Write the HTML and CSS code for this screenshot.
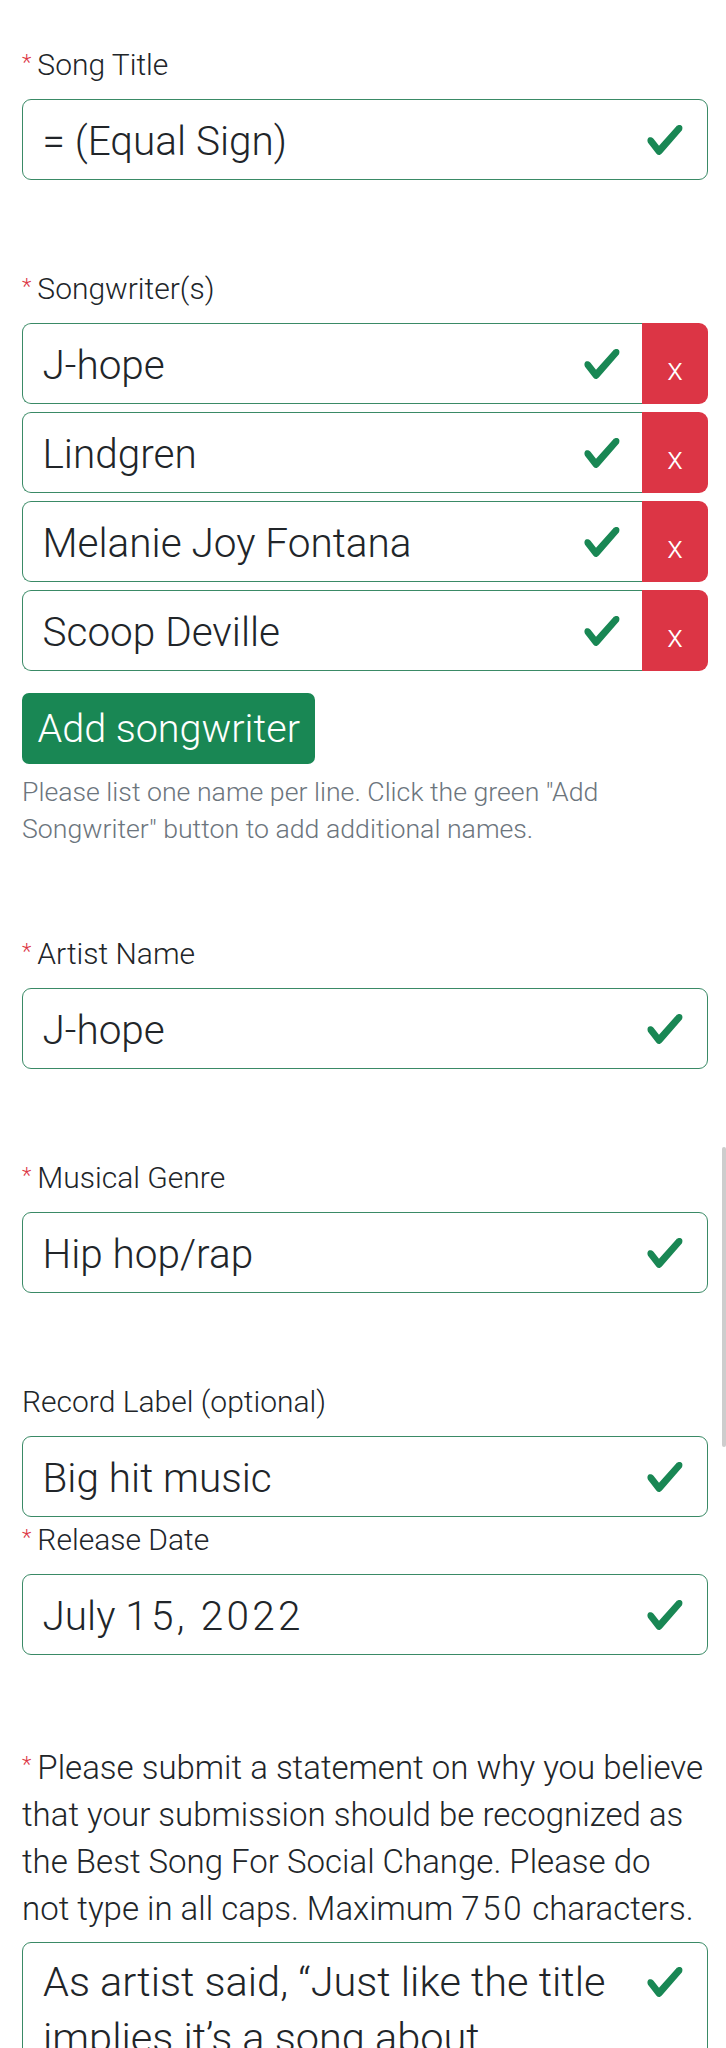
FILE: index.html
```html
<!DOCTYPE html>
<html lang="en">
<head>
<meta charset="utf-8">
<title>Submission form</title>
<link rel="stylesheet" href="styles.css">
</head>
<body>
<div class="page">
<form class="form">
  <div class="field field-first">
    <label class="label"><span class="req">*</span>Song Title</label>
    <div class="input">
      <span class="value">= (Equal Sign)</span>
      <svg class="check" viewBox="0 0 8 8"><path d="M2.3 6.73.6 4.53c-.4-1.04.46-1.4 1.1-.8l1.1 1.4 3.4-3.8c.6-.63 1.6-.27 1.2.7l-4 4.6c-.43.5-.8.4-1.1.1z"/></svg>
    </div>
  </div>

  <div class="field">
    <label class="label"><span class="req">*</span>Songwriter(s)</label>
    <div class="rows">
      <div class="group">
        <div class="input in-group">
          <span class="value">J-hope</span>
          <svg class="check" viewBox="0 0 8 8"><path d="M2.3 6.73.6 4.53c-.4-1.04.46-1.4 1.1-.8l1.1 1.4 3.4-3.8c.6-.63 1.6-.27 1.2.7l-4 4.6c-.43.5-.8.4-1.1.1z"/></svg>
        </div>
        <button type="button" class="remove">x</button>
      </div>
      <div class="group">
        <div class="input in-group">
          <span class="value">Lindgren</span>
          <svg class="check" viewBox="0 0 8 8"><path d="M2.3 6.73.6 4.53c-.4-1.04.46-1.4 1.1-.8l1.1 1.4 3.4-3.8c.6-.63 1.6-.27 1.2.7l-4 4.6c-.43.5-.8.4-1.1.1z"/></svg>
        </div>
        <button type="button" class="remove">x</button>
      </div>
      <div class="group">
        <div class="input in-group">
          <span class="value">Melanie Joy Fontana</span>
          <svg class="check" viewBox="0 0 8 8"><path d="M2.3 6.73.6 4.53c-.4-1.04.46-1.4 1.1-.8l1.1 1.4 3.4-3.8c.6-.63 1.6-.27 1.2.7l-4 4.6c-.43.5-.8.4-1.1.1z"/></svg>
        </div>
        <button type="button" class="remove">x</button>
      </div>
      <div class="group">
        <div class="input in-group">
          <span class="value">Scoop Deville</span>
          <svg class="check" viewBox="0 0 8 8"><path d="M2.3 6.73.6 4.53c-.4-1.04.46-1.4 1.1-.8l1.1 1.4 3.4-3.8c.6-.63 1.6-.27 1.2.7l-4 4.6c-.43.5-.8.4-1.1.1z"/></svg>
        </div>
        <button type="button" class="remove">x</button>
      </div>
    </div>
    <button type="button" class="add">Add songwriter</button>
    <p class="help">Please list one name per line. Click the green "Add Songwriter" button to add additional names.</p>
  </div>

  <div class="field field-after-help">
    <label class="label"><span class="req">*</span>Artist Name</label>
    <div class="input">
      <span class="value">J-hope</span>
      <svg class="check" viewBox="0 0 8 8"><path d="M2.3 6.73.6 4.53c-.4-1.04.46-1.4 1.1-.8l1.1 1.4 3.4-3.8c.6-.63 1.6-.27 1.2.7l-4 4.6c-.43.5-.8.4-1.1.1z"/></svg>
    </div>
  </div>

  <div class="field">
    <label class="label"><span class="req">*</span>Musical Genre</label>
    <div class="input">
      <span class="value">Hip hop/rap</span>
      <svg class="check" viewBox="0 0 8 8"><path d="M2.3 6.73.6 4.53c-.4-1.04.46-1.4 1.1-.8l1.1 1.4 3.4-3.8c.6-.63 1.6-.27 1.2.7l-4 4.6c-.43.5-.8.4-1.1.1z"/></svg>
    </div>
  </div>

  <div class="field">
    <label class="label">Record Label (optional)</label>
    <div class="input">
      <span class="value">Big hit music</span>
      <svg class="check" viewBox="0 0 8 8"><path d="M2.3 6.73.6 4.53c-.4-1.04.46-1.4 1.1-.8l1.1 1.4 3.4-3.8c.6-.63 1.6-.27 1.2.7l-4 4.6c-.43.5-.8.4-1.1.1z"/></svg>
    </div>
  </div>

  <div class="field field-tight">
    <label class="label"><span class="req">*</span>Release Date</label>
    <div class="input">
      <span class="value">July <span class="num">15, 2022</span></span>
      <svg class="check" viewBox="0 0 8 8"><path d="M2.3 6.73.6 4.53c-.4-1.04.46-1.4 1.1-.8l1.1 1.4 3.4-3.8c.6-.63 1.6-.27 1.2.7l-4 4.6c-.43.5-.8.4-1.1.1z"/></svg>
    </div>
  </div>

  <div class="field field-statement">
    <label class="label label-lg"><span class="req">*</span>Please submit a statement on why you believe<br>that your submission should be recognized as<br>the Best Song For Social Change. Please do<br>not type in all caps. Maximum <span class="num">750</span> characters.</label>
    <div class="textarea">
      <div class="textarea-value">As artist said, “Just like the title implies it’s a song about equality, fairness and the right to be happy for everyone.”</div>
      <svg class="check" viewBox="0 0 8 8"><path d="M2.3 6.73.6 4.53c-.4-1.04.46-1.4 1.1-.8l1.1 1.4 3.4-3.8c.6-.63 1.6-.27 1.2.7l-4 4.6c-.43.5-.8.4-1.1.1z"/></svg>
    </div>
  </div>
</form>
<div class="scroll-thumb"></div>
</div>
</body>
</html>
```

FILE: styles.css
```css
* {
  box-sizing: border-box;
}

html, body {
  margin: 0;
  padding: 0;
  background: #ffffff;
}

body {
  font-family: Roboto, "Liberation Sans", Arial, sans-serif;
  font-weight: 300;
  color: #212529;
}

.page {
  position: relative;
  width: 726px;
  height: 2048px;
  overflow: hidden;
}

.form {
  padding: 47px 18px 0 22px;
}

.field {
  margin-top: 91px;
}

.field-first {
  margin-top: 0;
}

.field-after-help {
  margin-top: 89px;
}

.field-tight {
  margin-top: 5px;
}

.field-statement {
  margin-top: 89px;
}

.label {
  display: block;
  font-size: 30px;
  line-height: 36px;
  margin-bottom: 16px;
  color: #212529;
}

.label-lg {
  font-size: 33px;
  line-height: 47px;
  margin-bottom: 10px;
  white-space: nowrap;
}

.req {
  color: #dc3545;
  font-size: 22px;
  line-height: 1;
  vertical-align: 5px;
  margin-right: 6px;
}

.label-lg .req {
  vertical-align: 7px;
}

.num {
  letter-spacing: 0.08em;
}

.input {
  display: flex;
  align-items: center;
  height: 81px;
  border: 1.5px solid #3a8a66;
  border-radius: 9px;
  padding: 4px 22px 0 19.5px;
  background: #fff;
}

.value {
  flex: 1;
  font-size: 40.5px;
  line-height: 1.2;
  color: #212529;
  white-space: nowrap;
}

.check {
  width: 40px;
  height: 40px;
  flex: none;
  fill: #198754;
}

.input .check {
  margin-top: -4px;
}

.rows {
  display: flex;
  flex-direction: column;
  gap: 8px;
}

.group {
  display: flex;
  height: 81px;
}

.in-group {
  flex: 1;
  border-radius: 9px 0 0 9px;
  border-right: none;
  padding-right: 20px;
}

.remove {
  width: 66px;
  flex: none;
  border: none;
  border-radius: 0 9px 9px 0;
  background: #dc3545;
  color: #fff;
  font-family: Roboto, "Liberation Sans", Arial, sans-serif;
  font-weight: 300;
  font-size: 32px;
  line-height: 1.5;
  padding: 10px 0 0;
  display: flex;
  align-items: center;
  justify-content: center;
}

.add {
  display: block;
  margin-top: 22px;
  height: 71px;
  padding: 0 15.5px;
  border: none;
  border-radius: 7px;
  background: #198754;
  color: #fff;
  font-family: Roboto, "Liberation Sans", Arial, sans-serif;
  font-weight: 300;
  font-size: 39.5px;
  line-height: 1.2;
}

.help {
  margin: 10px 0 0;
  font-size: 26.7px;
  line-height: 36.5px;
  color: #6c757d;
}

.textarea {
  display: flex;
  align-items: flex-start;
  height: 220px;
  border: 1.5px solid #3a8a66;
  border-radius: 9px;
  padding: 10.5px 22px 0 20px;
}

.textarea-value {
  flex: 1;
  margin-right: 32px;
  font-size: 41.5px;
  line-height: 56px;
  color: #212529;
}

.textarea .check {
  margin-top: 8px;
}

.scroll-thumb {
  position: absolute;
  left: 722px;
  top: 1147px;
  width: 4px;
  height: 300px;
  border-radius: 2px;
  background: #cdcdcd;
}
```
